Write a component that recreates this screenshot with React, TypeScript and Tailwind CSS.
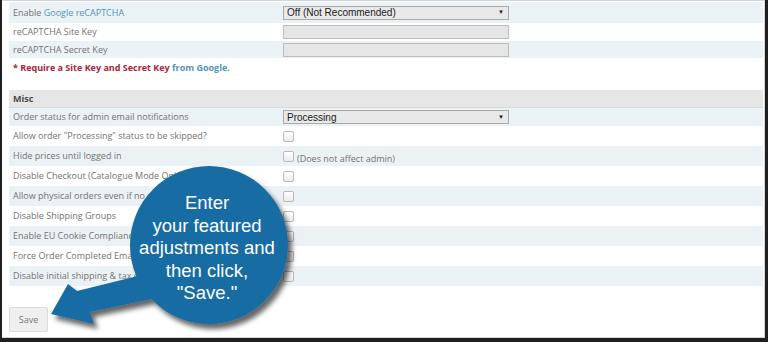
import React from 'react'

type RowProps = {
  label: React.ReactNode
  children?: React.ReactNode
  shaded?: boolean
  h?: string
}

const Row = ({ label, children, shaded, h = 'h-[20px]' }: RowProps) => (
  <div className={`flex items-center ${h} ${shaded ? 'bg-[#ebf2f6]' : 'bg-white'}`}>
    <div className="w-[274px] shrink-0 pl-[4px] text-[9px] text-[#727272] whitespace-nowrap overflow-hidden">{label}</div>
    <div className="flex items-center">{children}</div>
  </div>
)

const Select = ({ value }: { value: string }) => (
  <div className="w-[226px] h-[14px] bg-[#e9e9e9] border border-[#a9a9a9] flex items-center justify-between pl-[3px] pr-[4px] font-['Liberation_Sans',Arial,sans-serif] text-[10px] text-[#1a1a1a]">
    <span>{value}</span>
    <span className="text-[6px] text-[#222]">▼</span>
  </div>
)

const TextBox = () => <div className="w-[226px] h-[14px] bg-[#e6e6e6] border border-[#bdbdbd]" />

const Checkbox = () => (
  <div className="w-[11px] h-[11px] border border-[#b8b8b8] rounded-[2px] bg-gradient-to-b from-white to-[#ececec]" />
)

const miscChecks = [
  'Allow order "Processing" status to be skipped?',
  'Hide prices until logged in',
  'Disable Checkout (Catalogue Mode Only)',
  'Allow physical orders even if no shipping methods available',
  'Disable Shipping Groups',
  'Enable EU Cookie Compliance',
  'Force Order Completed Email',
  'Disable initial shipping & tax estimate',
]

export default function App() {
  return (
    <div className="relative w-[768px] h-[342px] overflow-hidden bg-[#1f1f1f] pl-[2px] pr-[3px] pb-[4px] font-['Open_Sans',sans-serif]">
      <div className="h-full bg-white border-t border-r border-b border-[#d4d4d4] pl-[7px] pr-[1px] pt-[1px]">
        <Row shaded h="h-[21px]" label={<>Enable <span className="text-[#4f95ba]">Google reCAPTCHA</span></>}>
          <Select value="Off (Not Recommended)" />
        </Row>
        <Row h="h-[18px]" label="reCAPTCHA Site Key">
          <TextBox />
        </Row>
        <Row shaded h="h-[17px]" label="reCAPTCHA Secret Key">
          <TextBox />
        </Row>
        <p className="pl-[4px] pt-[3px] h-[32px] text-[9px] font-bold text-[#a8253a]">
          * Require a Site Key and Secret Key <span className="text-[#4f95ba]">from Google.</span>
        </p>

        <div className="h-[18px] flex items-center pl-[4px] bg-[#e6e6e6] border-b border-[#d8d8d8] text-[9px] font-bold text-[#4a4a4a]">
          Misc
        </div>
        <Row shaded h="h-[18px]" label="Order status for admin email notifications">
          <Select value="Processing" />
        </Row>
        {miscChecks.map((label, i) => (
          <Row key={label} shaded={i % 2 === 1} label={label}>
            <Checkbox />
            {i === 1 && <span className="ml-[3px] mt-[5px] text-[9px] text-[#727272]">(Does not affect admin)</span>}
          </Row>
        ))}

        <button className="mt-[21px] w-[39px] h-[25px] bg-[#efefef] border border-[#dcdcdc] rounded-[2px] text-[9px] text-[#777]">
          Save
        </button>
      </div>

      {/* callout bubble + arrow */}
      <svg className="absolute inset-0 pointer-events-none" width="768" height="342" viewBox="0 0 768 342">
        <defs>
          <filter id="shadow" x="-20%" y="-20%" width="150%" height="150%">
            <feDropShadow dx="4" dy="5" stdDeviation="2.5" floodColor="#000" floodOpacity="0.6" />
          </filter>
        </defs>
        <g filter="url(#shadow)">
          <polygon points="51,314 68,284 77,291 170,268 176,294 90,312 94,324" fill="#196ca3" />
          <circle cx="209" cy="245" r="79" fill="#196ca3" />
        </g>
      </svg>
      <div className="absolute left-[125px] top-[192px] w-[164px] text-center text-white font-['Liberation_Sans',Arial,sans-serif] text-[18.5px] leading-[22.5px]">
        Enter<br />your featured<br />adjustments and<br />then click,<br />"Save."
      </div>
    </div>
  )
}
